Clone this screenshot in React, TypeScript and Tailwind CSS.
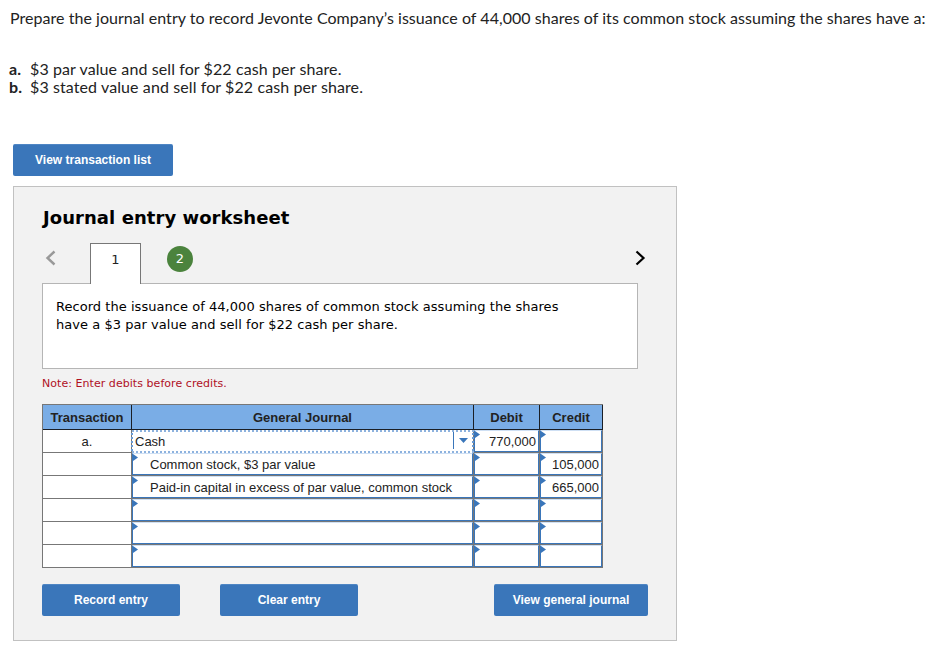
import React, { useState } from 'react';

type Row = {
  ref: string;
  account: string;
  debit: string;
  credit: string;
};

const ROWS: Row[] = [
  { ref: 'a.', account: 'Cash', debit: '770,000', credit: '' },
  { ref: '', account: 'Common stock, $3 par value', debit: '', credit: '105,000' },
  { ref: '', account: 'Paid-in capital in excess of par value, common stock', debit: '', credit: '665,000' },
  { ref: '', account: '', debit: '', credit: '' },
  { ref: '', account: '', debit: '', credit: '' },
  { ref: '', account: '', debit: '', credit: '' },
];

const COLUMNS = 'grid grid-cols-[89px_342px_66px_63px]';
const HEAD_CLASS =
  'flex items-center justify-center h-[25px] pt-[2px] border-b border-r border-[#1b1f26] bg-[#7aade6] font-bold text-[13px] text-[#222]';

function ActionButton({ className, children }: { className: string; children: React.ReactNode }) {
  return (
    <button
      type="button"
      className={`h-8 rounded-[2px] bg-[#3a76ba] border-t border-[#4f86c4] text-white text-[12px] font-bold pb-px ${className}`}
    >
      {children}
    </button>
  );
}

// Small blue flag in the top-left corner of every editable cell.
function Flag() {
  return (
    <svg className="absolute left-0 top-0" width="5" height="7" viewBox="0 0 5 7">
      <path d="M0 0L5 3.5L0 7Z" fill="#3a76ba" />
    </svg>
  );
}

function EntryCell({ value, align = 'right' }: { value: string; align?: 'left' | 'right' }) {
  return (
    <div className="h-[23px] border-b border-r border-[#777]">
      <div
        className={`relative flex h-[22px] items-center border border-[#3a76ba] border-t-[#cfe0f4] bg-white pt-[2px] ${
          align === 'left' ? 'pl-[17px]' : 'justify-end pr-[2px]'
        }`}
      >
        <Flag />
        {value}
      </div>
    </div>
  );
}

function SelectedAccount({ value }: { value: string }) {
  return (
    <div className="relative h-[23px] border-r border-[#777] bg-white">
      <div className="flex h-[22px] pl-[3px]">
        <span className="flex flex-1 items-center pt-[2px]">{value}</span>
        <span className="mt-px flex h-[18px] w-[20px] items-center justify-center border-l border-[#3a76ba]">
          <svg width="9" height="5" viewBox="0 0 9 5">
            <path d="M0 0H9L4.5 5Z" fill="#3a76ba" />
          </svg>
        </span>
      </div>
      <svg className="absolute -left-px top-0" width="343" height="23" fill="none" stroke="#8db2de" strokeWidth="2">
        <path d="M1 1H343M1 22H343" strokeDasharray="2 2" />
        <path d="M1 3V21M342 3V21" stroke="#6b9bd3" strokeDasharray="2 2" />
      </svg>
    </div>
  );
}

function JournalTable() {
  return (
    <div className="w-[561px] border-l border-t border-[#777] text-[13px] text-[#222]">
      <div className={COLUMNS}>
        <div className={HEAD_CLASS}>Transaction</div>
        <div className={HEAD_CLASS}>General Journal</div>
        <div className={HEAD_CLASS}>Debit</div>
        <div className={HEAD_CLASS}>Credit</div>
      </div>
      {ROWS.map((row, i) => (
        <div key={i} className={COLUMNS}>
          <div className="flex h-[23px] items-center justify-center border-b border-r border-[#777] bg-white pt-[2px]">
            {row.ref}
          </div>
          {i === 0 ? <SelectedAccount value={row.account} /> : <EntryCell value={row.account} align="left" />}
          <EntryCell value={row.debit} />
          <EntryCell value={row.credit} />
        </div>
      ))}
    </div>
  );
}

export default function App() {
  const [tab, setTab] = useState(1);

  return (
    <div className="h-[654px] w-[934px] overflow-hidden bg-white font-['Liberation_Sans',Arial,sans-serif] text-black">
      <div className="h-[144px] pt-[9px] pl-[10px] text-[16px] leading-[18px] text-[#222] font-['Lato','Open_Sans',sans-serif]">
        <p className="whitespace-nowrap tracking-[0.04px]">
          Prepare the journal entry to record Jevonte Company’s issuance of 44,000 shares of its common stock assuming the
          shares have a:
        </p>
        <ol className="mt-[33px] -ml-px tracking-[0.1px]">
          <li className="flex">
            <b className="w-[21px]">a.</b>$3 par value and sell for $22 cash per share.
          </li>
          <li className="flex">
            <b className="w-[21px]">b.</b>$3 stated value and sell for $22 cash per share.
          </li>
        </ol>
      </div>

      <ActionButton className="ml-[13px] w-[160px] block">View transaction list</ActionButton>

      <section className="mt-[10px] ml-[13px] h-[455px] w-[664px] border border-[#c1c1c1] bg-[#f2f2f2] pl-7 pt-[19px]">
        <h1 className="h-[37px] pl-px font-['DejaVu_Sans',Verdana,sans-serif] text-[18px] leading-[23px] font-bold tracking-[0.06px]">
          Journal entry worksheet
        </h1>

        <div className="flex h-[41px] w-[606px]">
          <button type="button" className="mt-[7px] ml-[3px] h-[16px] w-[11px]">
            <svg width="11" height="16" viewBox="0 0 11 16" fill="none" stroke="#999" strokeWidth="2.4">
              <path d="M9.5 1.5L2.5 8L9.5 14.5" />
            </svg>
          </button>
          <button
            type="button"
            onClick={() => setTab(1)}
            className="relative ml-[34px] h-[41px] w-[51px] border border-b-0 border-[#777] bg-white pb-[9px] font-['DejaVu_Sans',Verdana,sans-serif] text-[13px] text-[#222]"
          >
            1
          </button>
          <button
            type="button"
            onClick={() => setTab(2)}
            className="mt-[3px] ml-[26px] h-[26px] w-[26px] rounded-full bg-[#4b833d] font-['DejaVu_Sans',Verdana,sans-serif] text-[13px] text-white"
          >
            2
          </button>
          <button type="button" className="mt-[7px] mr-[2px] ml-auto h-[16px] w-[11px]">
            <svg width="11" height="16" viewBox="0 0 11 16" fill="none" stroke="#000" strokeWidth="2.2">
              <path d="M1.5 1.5L8.5 8L1.5 14.5" />
            </svg>
          </button>
        </div>

        <div className="-mt-px h-[86px] w-[596px] border border-[#b5b5b5] bg-white pt-[14px] pl-[13px] font-['DejaVu_Sans',Verdana,sans-serif] text-[13px] leading-[18px] tracking-[0.04px]">
          <p className="w-[530px]">
            {tab === 1
              ? 'Record the issuance of 44,000 shares of common stock assuming the shares have a $3 par value and sell for $22 cash per share.'
              : 'Record the issuance of 44,000 shares of common stock assuming the shares have a $3 stated value and sell for $22 cash per share.'}
          </p>
        </div>

        <p className="mt-[6px] mb-[13px] h-[16px] font-['DejaVu_Sans',Verdana,sans-serif] text-[11px] leading-[17px] tracking-[0.05px] text-[#b0101f]">
          Note: Enter debits before credits.
        </p>

        <JournalTable />

        <div className="mt-4 flex w-[606px]">
          <ActionButton className="w-[138px]">Record entry</ActionButton>
          <ActionButton className="ml-10 w-[138px]">Clear entry</ActionButton>
          <ActionButton className="ml-auto w-[154px]">View general journal</ActionButton>
        </div>
      </section>
    </div>
  );
}
